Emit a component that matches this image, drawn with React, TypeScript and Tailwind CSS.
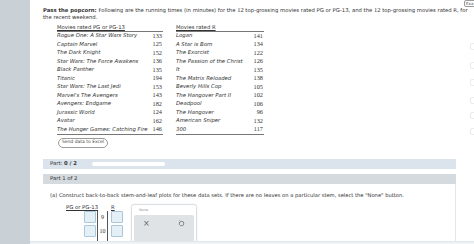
import React from "react";

const pg: [string, number][] = [
  ["Rogue One: A Star Wars Story", 133],
  ["Captain Marvel", 125],
  ["The Dark Knight", 152],
  ["Star Wars: The Force Awakens", 136],
  ["Black Panther", 135],
  ["Titanic", 194],
  ["Star Wars: The Last Jedi", 153],
  ["Marvel's The Avengers", 143],
  ["Avengers: Endgame", 182],
  ["Jurassic World", 124],
  ["Avatar", 162],
  ["The Hunger Games: Catching Fire", 146],
];
const r: [string, number][] = [
  ["Logan", 141],
  ["A Star is Born", 134],
  ["The Exorcist", 122],
  ["The Passion of the Christ", 126],
  ["It", 135],
  ["The Matrix Reloaded", 138],
  ["Beverly Hills Cop", 105],
  ["The Hangover Part II", 102],
  ["Deadpool", 106],
  ["The Hangover", 96],
  ["American Sniper", 132],
  ["300", 117],
];

const sans = "font-['DejaVu_Sans',Verdana,sans-serif]";
const serif = "font-['Liberation_Serif','Times_New_Roman',serif]";

function MovieTable({ title, rows, width }: { title: string; rows: [string, number][]; width: string }) {
  return (
    <div className={`${width} flex flex-col`}>
      <div className="h-[7.5px] leading-[7.5px] border-b border-[#777] text-[5.3px] underline decoration-[0.5px] underline-offset-[1px] whitespace-nowrap">
        {title}
      </div>
      <div className="border-b border-[#777]">
        {rows.map(([name, n]) => (
          <div key={name} className="h-[8.5px] flex items-center justify-between">
            <span className="italic text-[5.35px] leading-none whitespace-nowrap">{name}</span>
            <span className={`${serif} text-[6.3px] leading-none pr-[1px]`}>{n}</span>
          </div>
        ))}
      </div>
    </div>
  );
}

function Box() {
  return <div className="w-[12px] h-[12px] bg-[#e4eff6] border border-[#a9c8dc] rounded-[1px]" />;
}

export default function App() {
  return (
    <div className={`w-[474px] h-[244px] overflow-hidden relative bg-white flex text-[#333] ${sans}`}>
      <div className="w-[30px] shrink-0 bg-[#c9d1d7]" />
      <div className="w-[13px] shrink-0" />
      <div className="w-[413px] shrink-0 flex flex-col">
        <p className="pt-[5.5px] text-[5.3px] leading-[7px] whitespace-nowrap">
          <b>Pass the popcorn:</b> Following are the running times (in minutes) for the{" "}
          <span className={`${serif} text-[6.5px]`}>12</span> top-grossing movies rated PG or PG-13, and the{" "}
          <span className={`${serif} text-[6.5px]`}>12</span> top-grossing movies rated R, for
          <br />
          the recent weekend.
        </p>
        <div className="mt-[3.5px] ml-[14px] flex gap-[13px]">
          <MovieTable title="Movies rated PG or PG-13" rows={pg} width="w-[106px]" />
          <MovieTable title="Movies rated R" rows={r} width="w-[88px]" />
        </div>
        <div className="mt-[3px] ml-[15px] flex">
          <div className="flex items-center justify-center w-[50px] h-[10px] rounded-full border border-[#9a9a9a] text-[4.5px] text-[#444] whitespace-nowrap">
            Send data to Excel
          </div>
        </div>
        <div className="mt-[11px] h-[14px] bg-[#dbe4ed] flex items-center pl-[7px] text-[5.3px]">
          <span className="whitespace-nowrap">
            Part: <b>0 / 2</b>
          </span>
          <div className="ml-[15px] w-[73px] h-[4px] bg-white rounded-[2px]" />
        </div>
        <div className="mt-[5px] h-[14px] bg-[#d4dade] flex items-center pl-[7px] text-[5.3px]">Part 1 of 2</div>
        <div className="flex-1 border-r border-[#e2e7eb] flex flex-col">
          <p className="mt-[7.5px] pl-[7px] text-[5.2px] leading-[7px] whitespace-nowrap">
            (a) Construct back-to-back stem-and-leaf plots for these data sets. If there are no leaves on a particular
            stem, select the "None" button.
          </p>
          <div className="mt-[4px] flex items-start">
            <div className="ml-[16px] w-[38px] flex flex-col">
              <div className="h-[8.5px] leading-[8.5px] text-[5.3px] underline whitespace-nowrap pl-[7px]">PG or PG-13</div>
              <div className="flex flex-col items-end pr-[1px] gap-[2px]">
                <Box />
                <Box />
              </div>
            </div>
            <div className="mt-[8.5px] w-[11px] h-[30px] border-l border-r border-[#555] flex flex-col items-center">
              <div className={`${serif} h-[14px] leading-[13px] text-[6px]`}>9</div>
              <div className={`${serif} h-[14px] leading-[13px] text-[6px]`}>10</div>
            </div>
            <div className="ml-[3px] w-[12px] flex flex-col">
              <div className="h-[8.5px] leading-[8.5px] text-[5.3px] underline">R</div>
              <div className="flex flex-col gap-[2px]">
                <Box />
                <Box />
              </div>
            </div>
            <div className="ml-[8px] mt-[1.5px] w-[66px] h-[40px] bg-white border border-[#dadfe3] rounded-[3px] shadow-[0_0_2px_rgba(0,0,0,0.08)] flex flex-col px-[2px]">
              <div className="h-[10px] leading-[10px] pl-[5px] text-[3.5px] text-[#999]">None</div>
              <div className="flex-1 bg-[#dfe3e6] rounded-t-[2px] flex items-start pt-[5px] justify-between px-[9px] text-[#666]">
                <span className="text-[8px] leading-none">×</span>
                <svg width="7" height="7" viewBox="0 0 24 24" fill="none" stroke="#666" strokeWidth="2.5" strokeLinecap="round" strokeLinejoin="round">
                  <path d="M12 4a8 8 0 1 1-7 4" />
                  <path d="M6 3 9 5 7 8" />
                </svg>
              </div>
            </div>
          </div>
        </div>
      </div>
      <div className="flex-1 flex flex-col items-end relative">
        <div className="mr-[-3px] mt-0 w-[13px] h-[7px] border border-[#999] rounded-[2px] text-[4px] leading-[5px] pl-[1px] text-[#555] overflow-hidden">
          Exa
        </div>
        {[36, 12, 10, 11, 8, 9].map((m, i) => (
          <div key={i} style={{ marginTop: m }} className="mr-[-3px] w-[7px] h-[7px] border border-[#ececec] rounded-[2px]" />
        ))}
      </div>
      <div className="absolute left-[30px] right-0 bottom-0 h-[3px] bg-[#eef2f5] border-t border-[#e0e7ec]" />
    </div>
  );
}
